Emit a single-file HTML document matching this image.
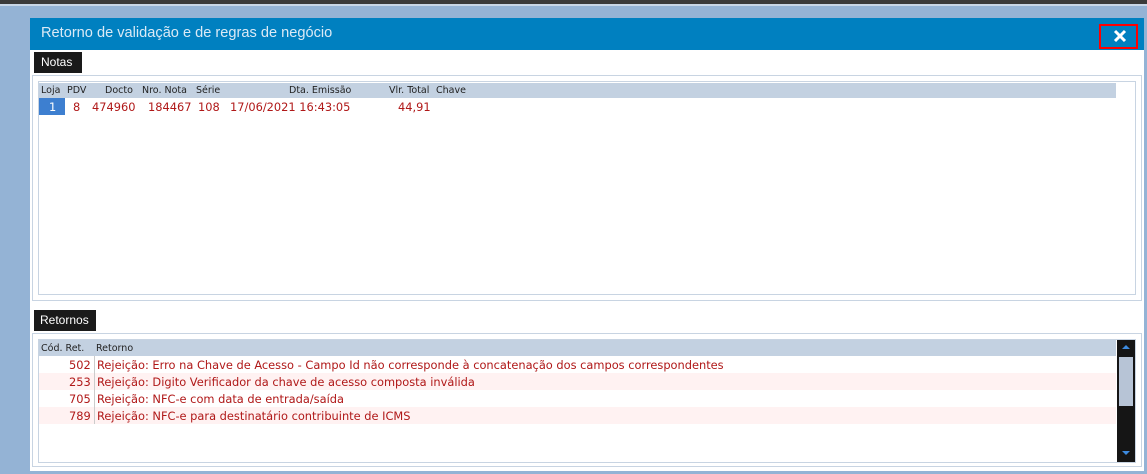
<!DOCTYPE html>
<html><head><meta charset="utf-8"><style>
*{margin:0;padding:0;box-sizing:border-box}
body{width:1147px;height:474px;overflow:hidden;background:#94b3d5;font-family:"Liberation Sans","DejaVu Sans",sans-serif;position:relative}
.abs{position:absolute}
.t{position:absolute;white-space:nowrap}
.h{font-family:"DejaVu Sans",sans-serif;font-size:9.5px;color:#222}
.r{font-family:"DejaVu Sans",sans-serif;font-size:11.4px;color:#b01818}
</style></head><body>
<div class="abs" style="left:0;top:0;width:1147px;height:4px;background:#3a3a3a"></div>
<div class="abs" style="left:0;top:4px;width:1147px;height:2px;background:#c8d6e6"></div>
<div class="abs" style="left:30px;top:18px;width:1114px;height:453px;background:#fff"></div>
<div class="abs" style="left:30px;top:18px;width:1114px;height:32px;background:#0080c0"></div>
<div class="t" style="left:41px;top:25px;font-size:14.6px;color:#dbeaf6">Retorno de validação e de regras de negócio</div>
<div class="abs" style="left:1099px;top:24px;width:39px;height:25px;border:2px solid #f00"></div>
<svg class="abs" style="left:1113px;top:29px" width="14" height="14"><path d="M2 2L12 12M12 2L2 12" stroke="#fff" stroke-width="3"/></svg>

<div class="abs" style="left:34px;top:52px;width:48px;height:21px;background:#1a1a1a"></div>
<div class="t" style="left:41px;top:55px;font-size:12px;color:#fff">Notas</div>
<div class="abs" style="left:32px;top:75px;width:1110px;height:226px;border:1px solid #c8d4e2"></div>
<div class="abs" style="left:38px;top:81px;width:1098px;height:214px;border:1px solid #c8d4e2"></div>
<div class="abs" style="left:39px;top:83px;width:1077px;height:15px;background:#c3d1e1"></div>
<div class="t h" style="left:41px;top:85px">Loja</div>
<div class="t h" style="left:67px;top:85px">PDV</div>
<div class="t h" style="left:105px;top:85px">Docto</div>
<div class="t h" style="left:142px;top:85px">Nro. Nota</div>
<div class="t h" style="left:196px;top:85px">Série</div>
<div class="t h" style="left:289px;top:85px">Dta. Emissão</div>
<div class="t h" style="left:389px;top:85px">Vlr. Total</div>
<div class="t h" style="left:436px;top:85px">Chave</div>
<div class="abs" style="left:39px;top:98px;width:26px;height:17px;background:#3d7fd0"></div>
<div class="t r" style="left:49px;top:100px;color:#fff">1</div>
<div class="t r" style="left:73px;top:100px">8</div>
<div class="t r" style="left:92px;top:100px">474960</div>
<div class="t r" style="left:148px;top:100px">184467</div>
<div class="t r" style="left:198px;top:100px">108</div>
<div class="t r" style="left:230px;top:100px">17/06/2021 16:43:05</div>
<div class="t r" style="left:398px;top:100px">44,91</div>

<div class="abs" style="left:34px;top:310px;width:62px;height:21px;background:#1a1a1a"></div>
<div class="t" style="left:40px;top:313px;font-size:12px;color:#fff">Retornos</div>
<div class="abs" style="left:32px;top:333px;width:1110px;height:134px;border:1px solid #c8d4e2"></div>
<div class="abs" style="left:38px;top:339px;width:1098px;height:124px;border:1px solid #c8d4e2"></div>
<div class="abs" style="left:39px;top:340px;width:1077px;height:16px;background:#c3d1e1"></div>
<div class="t h" style="left:41px;top:343px">Cód. Ret.</div>
<div class="t h" style="left:96px;top:343px">Retorno</div>
<div class="abs" style="left:39px;top:373px;width:1077px;height:17px;background:#fff2f2"></div>
<div class="abs" style="left:39px;top:407px;width:1077px;height:17px;background:#fff2f2"></div>
<div class="abs" style="left:94px;top:356px;width:1px;height:68px;background:#ccc"></div>
<div class="t r" style="left:69px;top:358px">502</div><div class="t r" style="left:97px;top:358px">Rejeição: Erro na Chave de Acesso - Campo Id não corresponde à concatenação dos campos correspondentes</div>
<div class="t r" style="left:69px;top:375px">253</div><div class="t r" style="left:97px;top:375px">Rejeição: Digito Verificador da chave de acesso composta inválida</div>
<div class="t r" style="left:69px;top:392px">705</div><div class="t r" style="left:97px;top:392px">Rejeição: NFC-e com data de entrada/saída</div>
<div class="t r" style="left:69px;top:409px">789</div><div class="t r" style="left:97px;top:409px">Rejeição: NFC-e para destinatário contribuinte de ICMS</div>
<div class="abs" style="left:1117px;top:340px;width:18px;height:122px;background:#151515"></div>
<div class="abs" style="left:1119px;top:357px;width:14px;height:49px;background:#b7c4d6"></div>
<svg class="abs" style="left:1121px;top:345px" width="10" height="5"><path d="M1 4L5 0L9 4Z" fill="#3d8be0"/></svg>
<svg class="abs" style="left:1121px;top:451px" width="10" height="5"><path d="M1 0L5 4L9 0Z" fill="#3d8be0"/></svg>
</body></html>
